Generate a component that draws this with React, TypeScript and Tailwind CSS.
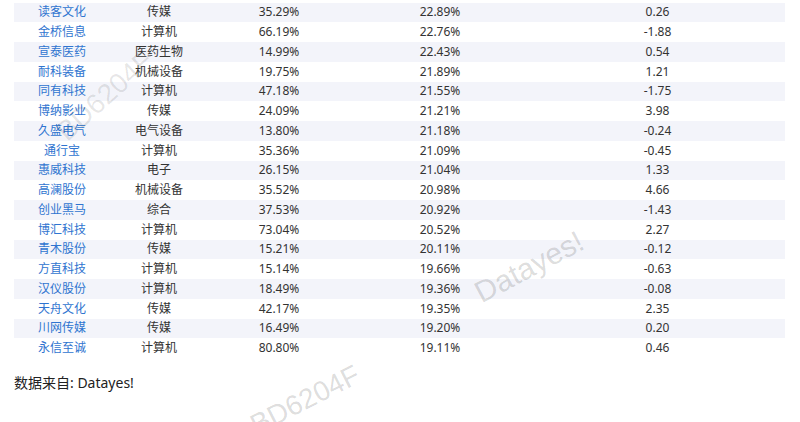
const rows: [string, string, string, string, string][] = [
  ["读客文化", "传媒", "35.29%", "22.89%", "0.26"],
  ["金桥信息", "计算机", "66.19%", "22.76%", "-1.88"],
  ["宣泰医药", "医药生物", "14.99%", "22.43%", "0.54"],
  ["耐科装备", "机械设备", "19.75%", "21.89%", "1.21"],
  ["同有科技", "计算机", "47.18%", "21.55%", "-1.75"],
  ["博纳影业", "传媒", "24.09%", "21.21%", "3.98"],
  ["久盛电气", "电气设备", "13.80%", "21.18%", "-0.24"],
  ["通行宝", "计算机", "35.36%", "21.09%", "-0.45"],
  ["惠威科技", "电子", "26.15%", "21.04%", "1.33"],
  ["高澜股份", "机械设备", "35.52%", "20.98%", "4.66"],
  ["创业黑马", "综合", "37.53%", "20.92%", "-1.43"],
  ["博汇科技", "计算机", "73.04%", "20.52%", "2.27"],
  ["青木股份", "传媒", "15.21%", "20.11%", "-0.12"],
  ["方直科技", "计算机", "15.14%", "19.66%", "-0.63"],
  ["汉仪股份", "计算机", "18.49%", "19.36%", "-0.08"],
  ["天舟文化", "传媒", "42.17%", "19.35%", "2.35"],
  ["川网传媒", "传媒", "16.49%", "19.20%", "0.20"],
  ["永信至诚", "计算机", "80.80%", "19.11%", "0.46"],
];

const App = () => {
  return (
    <div className="relative w-[800px] h-[422px] overflow-hidden bg-white text-[#333] font-['Noto_Sans','Noto_Sans_CJK_SC',sans-serif]">
      <div className="pt-[2.5px] pl-[14px]">
        <div className="w-[771px]">
          {rows.map((r, i) => (
            <div
              key={r[0]}
              className={`grid grid-cols-[96px_98px_142px_180px_255px] h-[19.75px] items-center text-center text-[12px] leading-none ${
                i % 2 === 0 ? "bg-[#f3f4fa]" : "bg-white"
              }`}
            >
              <a href="#" className="text-[#2f74d0]">
                {r[0]}
              </a>
              <span>{r[1]}</span>
              <span>{r[2]}</span>
              <span>{r[3]}</span>
              <span>{r[4]}</span>
            </div>
          ))}
        </div>
        <p className="mt-[15px] text-[14px] leading-[20px] text-[#222]">数据来自: Datayes!</p>
      </div>

      {/* watermarks */}
      <div className="pointer-events-none absolute left-[470px] top-[252px] -rotate-[28deg] text-[30px] leading-none text-black/15 font-['Liberation_Sans',sans-serif]">
        Datayes!
      </div>
      <div className="pointer-events-none absolute left-[246px] top-[386px] -rotate-[27deg] text-[28px] leading-none text-black/15 font-['Liberation_Sans',sans-serif]">
        BD6204F
      </div>
      <div className="pointer-events-none absolute left-[46px] top-[82px] -rotate-[42deg] text-[28px] leading-none text-black/10 font-['Liberation_Sans',sans-serif]">
        BD6204F
      </div>
    </div>
  );
};

export default App;
